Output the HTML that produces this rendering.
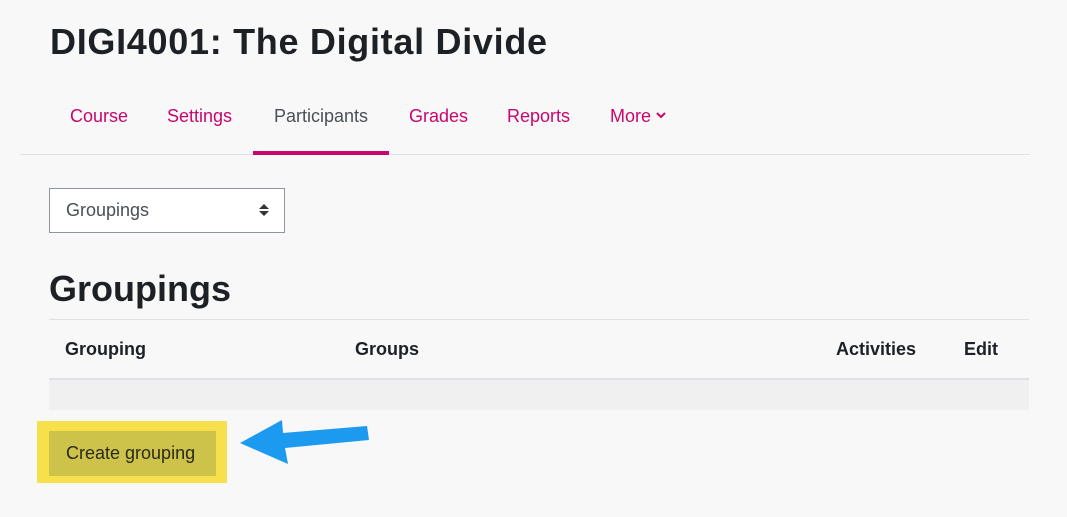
<!DOCTYPE html>
<html><head><style>
body{margin:0;width:1067px;height:517px;background:#f8f8f8;font-family:"Liberation Sans",sans-serif;color:#1d2125;position:relative;overflow:hidden}
.a{position:absolute;white-space:nowrap}
.nav{font-size:18px;color:#c8066f;top:106px}
</style></head><body>
<div class="a" style="left:50px;top:21px;font-size:36px;font-weight:bold;letter-spacing:0.7px">DIGI4001: The Digital Divide</div>
<div class="a nav" style="left:70px">Course</div>
<div class="a nav" style="left:167px">Settings</div>
<div class="a nav" style="left:274px;color:#495057">Participants</div>
<div class="a nav" style="left:409px">Grades</div>
<div class="a nav" style="left:507px">Reports</div>
<div class="a nav" style="left:610px">More <svg width="10" height="8" viewBox="0 0 10 8" style="vertical-align:3px"><path d="M1 2l4 4 4-4" stroke="#c8066f" stroke-width="2" fill="none"/></svg></div>
<div class="a" style="left:20px;top:154px;width:1010px;height:1px;background:#dee2e6"></div>
<div class="a" style="left:253px;top:151px;width:136px;height:4px;background:#c8066f"></div>
<div class="a" style="left:49px;top:188px;width:234px;height:43px;border:1px solid #8f959e;background:#fff"></div>
<div class="a" style="left:66px;top:200px;font-size:18px;color:#495057">Groupings</div>
<svg class="a" style="left:258px;top:203px" width="12" height="14" viewBox="0 0 12 14"><path d="M1 6L6 1L11 6Z M1 8L6 13L11 8Z" fill="#333"/></svg>
<div class="a" style="left:49px;top:268px;font-size:36px;font-weight:bold">Groupings</div>
<div class="a" style="left:49px;top:319px;width:980px;height:1px;background:#dee2e6"></div>
<div class="a" style="top:339px;left:65px;font-size:18px;font-weight:bold">Grouping</div>
<div class="a" style="top:339px;left:355px;font-size:18px;font-weight:bold">Groups</div>
<div class="a" style="top:339px;left:836px;font-size:18px;font-weight:bold">Activities</div>
<div class="a" style="top:339px;left:964px;font-size:18px;font-weight:bold">Edit</div>
<div class="a" style="left:49px;top:378px;width:980px;height:2px;background:#dee2e6"></div>
<div class="a" style="left:49px;top:380px;width:980px;height:30px;background:#f0f0f0"></div>
<div class="a" style="left:37px;top:421px;width:190px;height:62px;background:#f6e14c"></div>
<div class="a" style="left:49px;top:431px;width:167px;height:45px;background:#cdc24a"></div>
<div class="a" style="left:66px;top:443px;font-size:18px;color:#2a2a1a">Create grouping</div>
<svg class="a" style="left:230px;top:415px" width="150" height="60" viewBox="230 415 150 60"><path d="M240 443L282 420L283 433L367 426L369 440L285 448L288 464Z" fill="#1c9aef"/></svg>
</body></html>
